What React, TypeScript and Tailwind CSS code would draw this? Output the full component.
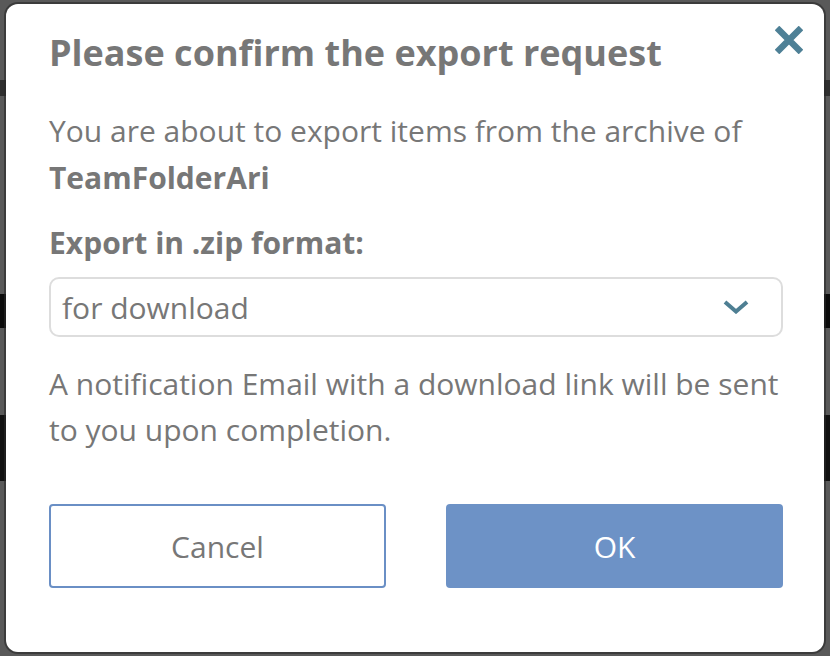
import React from 'react';

const font = { fontFamily: '"Open Sans", "Liberation Sans", sans-serif' };

const CloseIcon = () => (
  <svg width="28" height="28" viewBox="0 0 28 28" className="block">
    <path d="M2 2 L26 26 M26 2 L2 26" stroke="#4e8096" strokeWidth="6.5" strokeLinecap="butt" />
  </svg>
);

const Chevron = () => (
  <svg width="26" height="14" viewBox="0 0 26 14" className="block">
    <path d="M2 2 L13 11.5 L24 2" fill="none" stroke="#4e7f93" strokeWidth="4" />
  </svg>
);

const ExportDialog = () => (
  <div className="w-[818px] rounded-[12px] bg-white pl-[43px] pr-[41px] pt-[29px] pb-[64px] shadow-[0_0_0_2px_rgba(40,40,40,0.6)] text-[#777777]">
    <div className="flex items-start justify-between">
      <h2 className="text-[36px] leading-[40px] font-bold">Please confirm the export request</h2>
      <button className="mt-[-7px] mr-[-20px] p-0">
        <CloseIcon />
      </button>
    </div>

    <p className="mt-[34px] text-[30px] leading-[47px]">
      You are about to export items from the archive of <br />
      <span className="font-bold leading-[48px]">TeamFolderAri</span>
    </p>

    <p className="mt-[17px] text-[30px] leading-[47px] font-bold">Export in .zip format:</p>

    <div className="mt-[11px] flex h-[60px] items-center justify-between rounded-[10px] border-2 border-[#dddddd] pl-[11px] pr-[32px]">
      <span className="text-[30px] leading-[47px]">for download</span>
      <Chevron />
    </div>

    <p className="mt-[24px] text-[30px] leading-[46px]">
      A notification Email with a download link will be sent to you upon completion.
    </p>

    <div className="mt-[51px] flex justify-between">
      <button className="h-[84px] w-[337px] rounded-[4px] border-2 border-[#6a8fc5] bg-white text-[30px] text-[#777777]">
        Cancel
      </button>
      <button className="h-[84px] w-[337px] rounded-[4px] bg-[#6d92c6] text-[30px] text-white">
        OK
      </button>
    </div>
  </div>
);

export default function App() {
  return (
    <div className="relative h-[656px] w-[830px] overflow-hidden bg-white" style={font}>
      {/* page behind the overlay */}
      <div className="flex flex-col">
        <div className="h-[80px]" />
        <div className="h-[16px] bg-[#838383]" />
        <div className="h-[100px]" />
        <div className="ml-[8px] h-[18px] w-[4px] bg-[#3a5a90]" />
        <div className="h-[80px]" />
        <div className="flex justify-between">
          <div className="h-[34px] w-[12px] bg-[#222222]" />
          <div className="h-[34px] w-[12px] bg-[#222222]" />
        </div>
        <div className="h-[87px]" />
        <div className="h-[66px] bg-[#333333]" />
      </div>

      {/* overlay */}
      <div className="absolute inset-0 flex items-center justify-center bg-black/65">
        <ExportDialog />
      </div>
    </div>
  );
}
